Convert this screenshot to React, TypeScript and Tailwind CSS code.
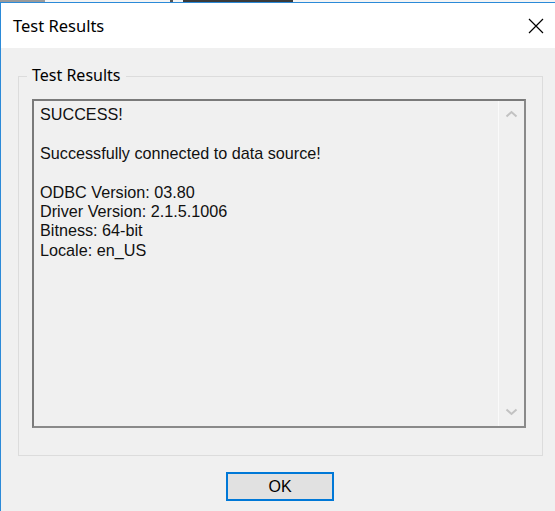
import React from "react";

export default function App() {
  const lines = [
    "SUCCESS!",
    "",
    "Successfully connected to data source!",
    "",
    "ODBC Version: 03.80",
    "Driver Version: 2.1.5.1006",
    "Bitness: 64-bit",
    "Locale: en_US",
  ];
  return (
    <div className="w-[555px] h-[511px] overflow-hidden bg-white flex flex-col">
      {/* strip of the window behind */}
      <div className="h-[2px] flex bg-[#f4f4f4]">
        <div className="w-[45px] bg-[#9a9a9a]" />
        <div className="w-[125px]" />
        <div className="w-[3px] bg-[#555]" />
        <div className="w-[10px]" />
        <div className="w-[110px] bg-[#3a3a3a]" />
      </div>
      <div className="flex-1 flex flex-col border-l border-t border-[#2b8ad8] bg-[#f0f0f0]">
        {/* title bar */}
        <div className="h-[45px] bg-white flex items-center justify-between pl-[12px] pr-[11px]">
          <span
            className="text-[16.5px] text-black pt-[1px]"
            style={{ fontFamily: '"Noto Sans", "Open Sans", sans-serif' }}
          >
            Test Results
          </span>
          <svg width="16" height="16" viewBox="0 0 16 16" className="mt-[1px]">
            <path d="M1 1 L15 15 M15 1 L1 15" stroke="#000" strokeWidth="1.2" fill="none" />
          </svg>
        </div>
        {/* client area */}
        <div
          className="flex-1 flex flex-col pl-[17px] pr-[12px] pt-[28px]"
          style={{ fontFamily: '"Liberation Sans", Arial, sans-serif' }}
        >
          <div className="relative h-[380px] border border-[#dcdcdc] pl-[13px] pr-[16px] pt-[22px] pb-[27px] flex">
            <span
              className="absolute left-[8px] top-[-12px] px-[5px] bg-[#f0f0f0] text-[16px] leading-[20px] text-black"
              style={{ fontFamily: '"Noto Sans", "Open Sans", sans-serif' }}
            >
              Test Results
            </span>
            <div className="flex-1 flex border-2 border-t-[#7a7a7a] border-l-[#7a7a7a] border-r-[#8a8a8a] border-b-[#8a8a8a] bg-[#f0f0f0]">
              <div className="flex-1 pl-[6px] pt-[4px] text-[16.2px] leading-[19.4px] text-[#111]">
                {lines.map((l, i) => (
                  <div key={i} className="h-[19.4px] whitespace-pre">
                    {l}
                  </div>
                ))}
              </div>
              <div className="w-[26px] border-l border-[#fafafa] flex flex-col items-center justify-between pt-[9px] pb-[10px]">
                <svg width="13" height="8" viewBox="0 0 13 8">
                  <path d="M1.5 6.5 L6.5 2 L11.5 6.5" stroke="#c2c2c2" strokeWidth="2" fill="none" />
                </svg>
                <svg width="13" height="8" viewBox="0 0 13 8">
                  <path d="M1.5 1.5 L6.5 6 L11.5 1.5" stroke="#c2c2c2" strokeWidth="2" fill="none" />
                </svg>
              </div>
            </div>
          </div>
          <div className="pt-[16px] pl-[208px]">
            <button className="w-[108px] h-[29px] border-2 border-[#0078d7] bg-[#e1e1e1] text-[16px] text-black flex items-center justify-center">
              OK
            </button>
          </div>
        </div>
      </div>
    </div>
  );
}
